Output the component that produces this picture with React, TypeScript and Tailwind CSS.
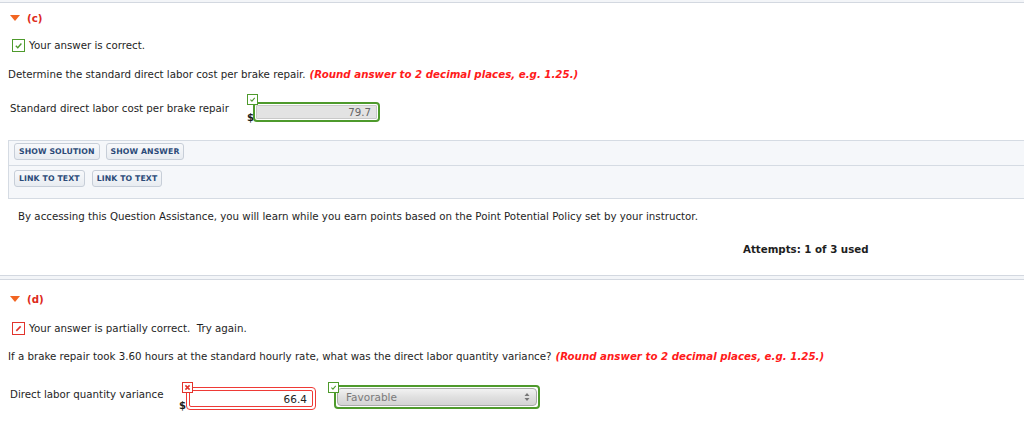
import React from "react";

const GREEN = "#4e9a2c";

function CheckBadge({ size = 13 }: { size?: number }) {
  return (
    <span
      className="inline-flex items-center justify-center bg-white border border-[#4e9a2c]"
      style={{ width: size, height: size }}
    >
      <svg width={size - 4} height={size - 4} viewBox="0 0 10 10">
        <path d="M2 5.3 L4.2 7.4 L8.2 2.8" fill="none" stroke={GREEN} strokeWidth="1.5" />
      </svg>
    </span>
  );
}

function PartialBadge() {
  return (
    <span className="inline-flex items-center justify-center w-[13px] h-[13px] bg-white border border-[#e2342c]">
      <svg width="9" height="9" viewBox="0 0 10 10">
        <path d="M2.6 7.6 L7.4 2.6" fill="none" stroke="#e2342c" strokeWidth="1.8" />
      </svg>
    </span>
  );
}

function WrongBadge() {
  return (
    <span className="inline-flex items-center justify-center w-[11px] h-[11px] bg-white border border-[#e2342c]">
      <svg width="7" height="7" viewBox="0 0 10 10">
        <path d="M2 2 L8 8 M8 2 L2 8" fill="none" stroke="#e2342c" strokeWidth="2.2" />
      </svg>
    </span>
  );
}

function PartHeader({ label }: { label: string }) {
  return (
    <div className="flex items-center h-[14px]">
      <span className="ml-[2px] w-0 h-0 border-l-[5px] border-r-[5px] border-t-[6px] border-l-transparent border-r-transparent border-t-[#f26522]" />
      <span className="ml-[7px] font-bold text-[#dd2a1b]">{label}</span>
    </div>
  );
}

function AssistButton({ children }: { children: React.ReactNode }) {
  return (
    <span className="inline-flex items-center h-[17px] px-[4px] rounded-[3px] border border-[#c7ced8] bg-gradient-to-b from-[#f8f9fb] to-[#e8ecf1] text-[7.75px] font-bold text-[#2b4a78] tracking-[0.1px]">
      {children}
    </span>
  );
}

export default function App() {
  return (
    <div className="w-[1024px] h-[424px] overflow-hidden bg-white text-[10.25px] leading-[12px] text-[#1e1e1e] font-['DejaVu_Sans','Verdana',sans-serif]">
      {/* top edge */}
      <div className="h-[3px] bg-[#f3f5f8] border-b border-[#d3d8e0]" />

      {/* ─── Part (c) ─── */}
      <div className="pl-[8px]">
        <div className="mt-[8px]">
          <PartHeader label="(c)" />
        </div>

        <div className="mt-[13px] h-[14px] flex items-center">
          <span className="ml-[4px] flex">
            <CheckBadge />
          </span>
          <span className="ml-[4px]">Your answer is correct.</span>
        </div>

        <div className="mt-[15px] h-[14px] flex items-center whitespace-nowrap">
          <span>Determine the standard direct labor cost per brake repair.</span>
          <span className="ml-[4px] italic font-bold text-[#ff1a1a]">(Round answer to 2 decimal places, e.g. 1.25.)</span>
        </div>

        <div className="mt-[11px] h-[30px] flex">
          <div className="w-[239px] pl-[2px] pt-[10px]">Standard direct labor cost per brake repair</div>
          <div className="relative pt-[8px] flex items-end">
            <span className="absolute left-0 top-[2px] flex">
              <CheckBadge size={11} />
            </span>
            <span className="w-[6px] text-[10px] leading-[10px] font-bold -mb-[1px]">$</span>
            <div className="w-[127px] h-[20px] rounded-[4px] border-2 border-[#4e9a2c] p-[1px]">
              <div className="h-full bg-[#e3e3e3] border border-[#c9c9c9] rounded-[1px] flex items-center justify-end pr-[5px] text-[#666]">
                79.7
              </div>
            </div>
          </div>
        </div>

        {/* Question assistance panel */}
        <div className="mt-[18px] bg-[#f5f7fa] border-t border-b border-l border-[#d5dbe3]">
          <div className="pt-[2px] pb-[5px] pl-[5px] flex gap-[6px] border-b border-[#d5dbe3]">
            <AssistButton>SHOW SOLUTION</AssistButton>
            <AssistButton>SHOW ANSWER</AssistButton>
          </div>
          <div className="pt-[4px] pb-[11px] pl-[5px] flex gap-[7px]">
            <AssistButton>LINK TO TEXT</AssistButton>
            <AssistButton>LINK TO TEXT</AssistButton>
          </div>
        </div>

        <div className="mt-[10px] h-[14px] pl-[10px] flex items-center whitespace-nowrap">
          By accessing this Question Assistance, you will learn while you earn points based on the Point Potential Policy set by your instructor.
        </div>

        <div className="mt-[19px] h-[14px] pl-[735px] flex items-center font-bold whitespace-nowrap">
          Attempts: 1 of 3 used
        </div>
      </div>

      {/* separator */}
      <div className="mt-[19px] h-[5px] bg-[#f3f5f8] border-t border-b border-[#d3d8e0]" />

      {/* ─── Part (d) ─── */}
      <div className="pl-[8px]">
        <div className="mt-[12px]">
          <PartHeader label="(d)" />
        </div>

        <div className="mt-[15px] h-[14px] flex items-center whitespace-pre">
          <span className="ml-[4px] flex">
            <PartialBadge />
          </span>
          <span className="ml-[4px]">Your answer is partially correct.  Try again.</span>
        </div>

        <div className="mt-[14px] h-[14px] flex items-center whitespace-nowrap">
          <span>If a brake repair took 3.60 hours at the standard hourly rate, what was the direct labor quantity variance?</span>
          <span className="ml-[4px] italic font-bold text-[#ff1a1a]">(Round answer to 2 decimal places, e.g. 1.25.)</span>
        </div>

        <div className="mt-[17px] h-[30px] flex">
          <div className="w-[171px] pl-[2px] pt-[8px]">Direct labor quantity variance</div>

          <div className="relative pt-[6px] flex items-end">
            <span className="absolute left-[3px] top-[2px] flex">
              <WrongBadge />
            </span>
            <span className="w-[7px] text-[10px] leading-[10px] font-bold -mb-[1px]">$</span>
            <div className="w-[130px] h-[23px] rounded-[4px] border border-[#ee3a36] p-[2px] bg-white">
              <div className="h-full border border-[#ee3a36] rounded-[2px] flex items-center justify-end pr-[5px] text-[#222] text-[10.5px]">
                66.4
              </div>
            </div>
          </div>

          <div className="relative ml-[12px] pt-[5px]">
            <span className="absolute left-0 top-[2px] flex">
              <CheckBadge size={11} />
            </span>
            <div className="ml-[6px] w-[206px] h-[24px] rounded-[4px] border-2 border-[#4e9a2c] p-[1px]">
              <div className="h-full rounded-[4px] border border-[#aaaaaa] bg-gradient-to-b from-[#f2f2f2] via-[#e0e0e0] to-[#d4d4d4] flex items-center justify-between pl-[8px] pr-[6px] text-[#7a7a7a] text-[10.5px]">
                <span>Favorable</span>
                <svg width="6" height="10" viewBox="0 0 6 10">
                  <path d="M0.5 4 L3 1 L5.5 4 Z M0.5 6 L3 9 L5.5 6 Z" fill="#777" />
                </svg>
              </div>
            </div>
          </div>
        </div>
      </div>
    </div>
  );
}
